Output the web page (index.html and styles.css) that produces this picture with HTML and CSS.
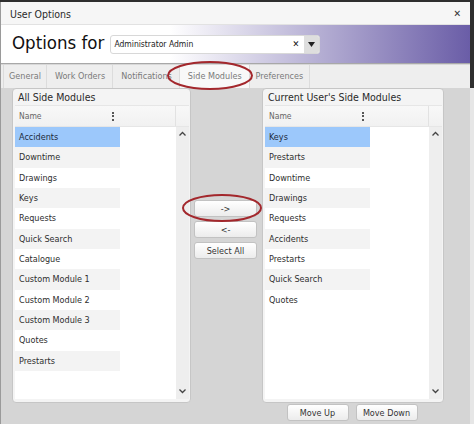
FILE: index.html
```html
<!DOCTYPE html>
<html>
<head>
<meta charset="utf-8">
<link rel="stylesheet" href="styles.css">
</head>
<body>
<div class="page">
  <div class="modal">
    <div class="titlebar">
      <span class="title">User Options</span>
      <span class="close">✕</span>
    </div>
    <div class="header">
      <h1 class="heading">Options for</h1>
      <div class="select">
        <span class="select-value">Administrator Admin</span>
        <span class="select-clear">✕</span>
        <span class="select-arrow"><svg width="7" height="5" viewBox="0 0 7 5"><path d="M0 0h7L3.5 5z" fill="#222"/></svg></span>
      </div>
    </div>
    <div class="tabs">
      <div class="tab tab-first">General</div>
      <div class="tab">Work Orders</div>
      <div class="tab">Notifications</div>
      <div class="tab active">Side Modules</div>
      <div class="tab tab-last">Preferences</div>
    </div>
    <div class="content">
      <div class="panel panel-left">
        <div class="panel-title">All Side Modules</div>
        <div class="grid">
          <div class="grid-head">
            <div class="col-name">Name<span class="kebab"><i></i><i></i><i></i></span></div>
            <div class="col-fill"></div>
            <div class="col-scroll"></div>
          </div>
          <div class="grid-body">
            <div class="rows">
              <div class="row selected">Accidents</div>
              <div class="row">Downtime</div>
              <div class="row">Drawings</div>
              <div class="row">Keys</div>
              <div class="row">Requests</div>
              <div class="row">Quick Search</div>
              <div class="row">Catalogue</div>
              <div class="row">Custom Module 1</div>
              <div class="row">Custom Module 2</div>
              <div class="row">Custom Module 3</div>
              <div class="row">Quotes</div>
              <div class="row">Prestarts</div>
            </div>
            <div class="scrollbar">
              <svg width="7" height="5" viewBox="0 0 7 5"><path d="M0.5 4.5L3.5 1.5L6.5 4.5" fill="none" stroke="#444" stroke-width="1.3"/></svg>
              <svg width="7" height="5" viewBox="0 0 7 5"><path d="M0.5 0.5L3.5 3.5L6.5 0.5" fill="none" stroke="#444" stroke-width="1.3"/></svg>
            </div>
          </div>
        </div>
      </div>
      <div class="mid">
        <button class="btn btn-mid">-&gt;</button>
        <button class="btn btn-mid">&lt;-</button>
        <button class="btn btn-mid">Select All</button>
      </div>
      <div class="right-col">
        <div class="panel panel-right">
          <div class="panel-title">Current User's Side Modules</div>
          <div class="grid">
            <div class="grid-head">
              <div class="col-name">Name<span class="kebab"><i></i><i></i><i></i></span></div>
              <div class="col-fill"></div>
              <div class="col-scroll"></div>
            </div>
            <div class="grid-body">
              <div class="rows">
                <div class="row selected">Keys</div>
                <div class="row">Prestarts</div>
                <div class="row">Downtime</div>
                <div class="row">Drawings</div>
                <div class="row">Requests</div>
                <div class="row">Accidents</div>
                <div class="row">Prestarts</div>
                <div class="row">Quick Search</div>
                <div class="row">Quotes</div>
              </div>
              <div class="scrollbar">
                <svg width="7" height="5" viewBox="0 0 7 5"><path d="M0.5 4.5L3.5 1.5L6.5 4.5" fill="none" stroke="#444" stroke-width="1.3"/></svg>
                <svg width="7" height="5" viewBox="0 0 7 5"><path d="M0.5 0.5L3.5 3.5L6.5 0.5" fill="none" stroke="#444" stroke-width="1.3"/></svg>
              </div>
            </div>
          </div>
        </div>
        <div class="bottom-btns">
          <button class="btn btn-bottom">Move Up</button>
          <button class="btn btn-bottom">Move Down</button>
        </div>
      </div>
    </div>
  </div>
  <svg class="rings" width="474" height="424" viewBox="0 0 474 424">
    <ellipse cx="210" cy="75.5" rx="42" ry="13.5" fill="none" stroke="#a3272c" stroke-width="2"/>
    <ellipse cx="222" cy="208" rx="39" ry="13" fill="none" stroke="#a3272c" stroke-width="2"/>
  </svg>
</div>
</body>
</html>
```

FILE: styles.css
```css
* { box-sizing: border-box; }
html, body { margin: 0; padding: 0; }
body {
  width: 474px;
  height: 424px;
  overflow: hidden;
  background: linear-gradient(#2e2e2e 0, #2e2e2e 88px, #e6e6e6 88px);
  font-family: "DejaVu Sans Condensed", "DejaVu Sans", sans-serif;
  font-stretch: condensed;
  color: #333;
}
.page {
  position: relative;
  width: 474px;
  height: 424px;
  padding-top: 2px;
}
.modal {
  width: 470px;
  height: 422px;
  display: flex;
  flex-direction: column;
  background: #d5d5d5;
  border-left: 1px solid #9a9a9a;
}
.titlebar {
  height: 23px;
  flex: none;
  display: flex;
  align-items: center;
  justify-content: space-between;
  padding: 1px 9px 0 9px;
  background: #f6f6f6;
  border-bottom: 1px solid #e2e2e2;
}
.title {
  font-size: 10.5px;
  color: #2a2a2a;
}
.close {
  font-size: 10px;
  font-weight: bold;
  color: #333;
}
.header {
  height: 39px;
  flex: none;
  display: flex;
  align-items: center;
  padding-left: 11px;
  background: linear-gradient(90deg, #ffffff 0, #ffffff 36%, #6a5da7 100%);
  border-bottom: 1px solid #a8a8a8;
  box-shadow: 0 1px 0 #c9c9c9;
}
.heading {
  margin: 0;
  font-size: 18.5px;
  font-weight: normal;
  color: #111;
  line-height: 1;
  padding-bottom: 1px;
}
.select {
  margin-left: 6px;
  width: 210px;
  height: 19px;
  display: flex;
  align-items: center;
  background: #fff;
  border: 1px solid #d8d8d8;
  border-radius: 3px;
  overflow: hidden;
}
.select-value {
  flex: 1;
  padding-left: 3px;
  font-size: 8.5px;
  color: #222;
}
.select-clear {
  font-size: 9px;
  font-weight: bold;
  color: #111;
  padding-right: 5px;
}
.select-arrow {
  width: 15px;
  height: 100%;
  display: flex;
  align-items: center;
  justify-content: center;
  background: #dedede;
}
.tabs {
  height: 24px;
  flex: none;
  display: flex;
  padding-left: 2px;
  background: #eeeeee;
  border-top: 1px solid #d8d8d8;
}
.tab {
  padding: 0 7px;
  line-height: 23px;
  font-size: 9px;
  color: #7a7a7a;
  border-right: 1px solid #dcdcdc;
  border-left: 1px solid transparent;
}
.tab-first {
  padding: 0 5px;
  border-left-color: #dcdcdc;
}
.tab-last { padding: 0 6px 0 5px; }
.tab.active {
  background: #f8f8f8;
}
.content {
  flex: 1;
  display: flex;
  padding-left: 11px;
}
.panel {
  height: 315px;
  display: flex;
  flex-direction: column;
  background: #f4f4f4;
  border: 1px solid #c6c6c6;
  border-radius: 4px;
  padding: 0 1px 3px 2px;
}
.panel-left { width: 179px; }
.panel-right { width: 182px; }
.panel-title {
  height: 16px;
  flex: none;
  padding-left: 3px;
  line-height: 17px;
  font-size: 10.5px;
  color: #2a2a2a;
}
.grid {
  flex: 1;
  display: flex;
  flex-direction: column;
  min-height: 0;
}
.grid-head {
  height: 22px;
  flex: none;
  display: flex;
  background: linear-gradient(#f8f8f8, #f1f1f1);
  border-top: 1px solid #e6e6e6;
  border-bottom: 1px solid #e6e6e6;
}
.col-name {
  width: 105px;
  display: flex;
  align-items: center;
  justify-content: space-between;
  padding-left: 4px;
  padding-right: 6px;
  font-size: 8.5px;
  color: #666;
}
.kebab {
  display: flex;
  flex-direction: column;
  gap: 1.5px;
}
.kebab i {
  display: block;
  width: 2px;
  height: 2px;
  border-radius: 1px;
  background: #222;
}
.col-fill {
  flex: 1;
  border-right: 1px solid #e2e2e2;
}
.col-scroll { width: 13px; }
.grid-body {
  flex: 1;
  display: flex;
  min-height: 0;
}
.rows {
  flex: 1;
  background: #fff;
}
.row {
  width: 105px;
  height: 20.33px;
  line-height: 20.33px;
  padding-left: 4px;
  font-size: 9px;
  color: #2e2e2e;
  background: #fff;
}
.row:nth-child(even) { background: #f3f3f3; }
.row.selected {
  background: #9cc8fb;
  color: #1d2a3a;
}
.scrollbar {
  width: 13px;
  display: flex;
  flex-direction: column;
  justify-content: space-between;
  align-items: center;
  padding: 4px 0 5px;
  background: #eeeeee;
}
.scrollbar svg { display: block; }
.mid {
  width: 71px;
  display: flex;
  flex-direction: column;
  gap: 4px;
  padding-left: 3px;
  padding-top: 112px;
}
.btn {
  font-family: inherit;
  font-stretch: condensed;
  font-size: 9px;
  color: #333;
  background: linear-gradient(#ffffff, #ececec);
  border: 1px solid #c2c2c2;
  border-radius: 3px;
  padding: 0;
  margin: 0;
}
.btn-mid {
  width: 63px;
  height: 17px;
}
.right-col {
  display: flex;
  flex-direction: column;
}
.bottom-btns {
  display: flex;
  justify-content: center;
  gap: 7px;
  margin-top: 1px;
  padding-right: 2px;
}
.btn-bottom {
  width: 62px;
  height: 17px;
}
.rings {
  position: absolute;
  left: 0;
  top: 0;
  pointer-events: none;
}
```
